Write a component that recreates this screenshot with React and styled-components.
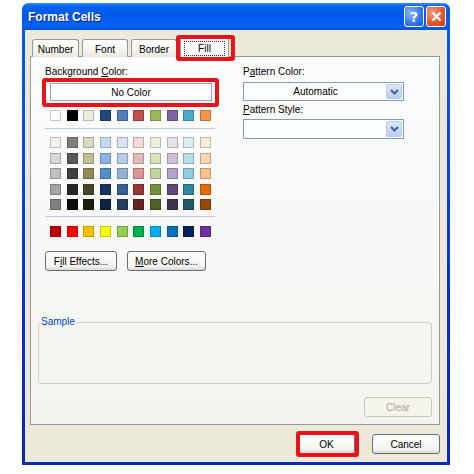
import React from "react";
import styled, { createGlobalStyle, css } from "styled-components";

const GlobalStyle = createGlobalStyle`
  html, body { margin: 0; padding: 0; background: #ffffff; }
  body { font-family: "Liberation Sans", Arial, sans-serif; font-size: 10px; color: #000; }
  * { box-sizing: border-box; }
`;

const Page = styled.div`
  padding: 3px 0 0 22px;
`;

const Window = styled.div`
  width: 428px;
  height: 462px;
  display: flex;
  flex-direction: column;
  background: linear-gradient(to bottom, #0a5fe8, #0831d9 60%, #0a2bb8);
  border-radius: 7px 7px 0 0;
  overflow: hidden;
`;

const TitleBar = styled.div`
  height: 27px;
  flex: none;
  display: flex;
  align-items: center;
  padding: 0 4px 0 6px;
  background: linear-gradient(
    to bottom,
    #3d95ff 0%,
    #0a66f0 10%,
    #0058e6 40%,
    #0062f4 85%,
    #0050dc 100%
  );
  color: #ffffff;
`;

const Title = styled.div`
  flex: 1;
  font-family: "Liberation Sans", Arial, sans-serif;
  font-weight: bold;
  font-size: 12px;
  text-shadow: 1px 1px 0 #0a1e8a;
  padding-top: 1px;
`;

const Caption = styled.div`
  width: 20px;
  height: 21px;
  margin-left: 2px;
  border: 1px solid #ffffff;
  border-radius: 3px;
  display: flex;
  align-items: center;
  justify-content: center;
  color: #ffffff;
  font-family: "DejaVu Sans", sans-serif;
  font-weight: bold;
  font-size: 14px;
  ${(p) =>
    p.$close
      ? css`
          background: radial-gradient(circle at 30% 30%, #f0a080, #e2582f 55%, #c43a14);
        `
      : css`
          background: radial-gradient(circle at 30% 30%, #8fb6ff, #3a78f2 55%, #1c55d6);
        `}
`;

const Body = styled.div`
  flex: 1;
  margin: 0 3px 3px;
  background: #ece9d8;
  display: flex;
  flex-direction: column;
  padding: 5px 7px 8px 5px;
`;

const TabRow = styled.div`
  height: 22px;
  display: flex;
  align-items: flex-end;
  padding-left: 2px;
  margin-bottom: -1px;
  position: relative;
  z-index: 2;
`;

const Tab = styled.div`
  position: relative;
  width: ${(p) => p.$w}px;
  margin-right: 3px;
  height: ${(p) => (p.$active ? 22 : 18)}px;
  display: flex;
  align-items: center;
  justify-content: center;
  border: 1px solid #919b9c;
  border-bottom: none;
  border-radius: 3px 3px 0 0;
  font-size: 10px;
  padding-top: ${(p) => (p.$active ? 2 : 1)}px;
  background: ${(p) =>
    p.$active ? "#fcfcfe" : "linear-gradient(to bottom, #ffffff, #f3f2ec 70%, #e8e6dc)"};
  ${(p) =>
    p.$active &&
    css`
      border-top: 2px solid #ffc83c;
      &::after {
        content: "";
        position: absolute;
        top: -2px;
        left: -5px;
        right: -7px;
        bottom: -4px;
        border: 4px solid #e8131b;
        border-radius: 3px;
        z-index: 5;
      }
    `}
`;

const Focus = styled.span`
  border: 1px dotted #333;
  padding: 1px 13px;
  line-height: 11px;
`;

const Panel = styled.div`
  flex: 1;
  border: 1px solid #919b9c;
  background: linear-gradient(to bottom, #fcfcfe, #f4f3ee);
  display: flex;
  flex-direction: column;
  padding: 9px 7px 7px 7px;
  position: relative;
  z-index: 1;
`;

const TopGrid = styled.div`
  display: grid;
  grid-template-columns: 170px 161px;
  column-gap: 28px;
  padding-left: 7px;
  align-items: start;
`;

const Column = styled.div`
  display: flex;
  flex-direction: column;
`;

const Label = styled.div`
  height: 12px;
  line-height: 12px;
  font-size: 10px;
  margin-top: ${(p) => p.$mt || 0}px;
  white-space: nowrap;
`;

const Highlight = styled.div`
  position: relative;
  &::after {
    content: "";
    position: absolute;
    top: ${(p) => p.$t}px;
    left: ${(p) => p.$l}px;
    right: ${(p) => p.$r}px;
    bottom: ${(p) => p.$b}px;
    border: 4px solid #e8131b;
    border-radius: 3px;
    pointer-events: none;
    z-index: 5;
  }
`;

const NoColorWrap = styled(Highlight)`
  width: 162px;
  margin: 5px 0 0 5px;
`;

const NoColorButton = styled.div`
  width: 162px;
  height: 18px;
  border: 1px solid #9aa3ad;
  background: #ffffff;
  display: flex;
  align-items: center;
  justify-content: center;
  font-size: 10px;
`;

const SwatchGrid = styled.div`
  display: grid;
  grid-template-columns: repeat(10, 11px);
  column-gap: 5.67px;
  row-gap: 4.5px;
  margin-left: 5px;
  margin-top: ${(p) => p.$mt}px;
`;

const Swatch = styled.div`
  width: 11px;
  height: 11px;
  border: 1px solid rgba(0, 0, 0, 0.22);
`;

const Separator = styled.div`
  width: 170px;
  height: 1px;
  background: #b7cbe3;
  margin-top: ${(p) => p.$mt}px;
`;

const ButtonRow = styled.div`
  display: flex;
  gap: 10px;
  margin-top: ${(p) => p.$mt || 0}px;
  justify-content: ${(p) => p.$justify || "flex-start"};
`;

const Button = styled.div`
  width: ${(p) => p.$w}px;
  height: 20px;
  border: 1px solid ${(p) => (p.$disabled ? "#c9c7ba" : "#5e6f86")};
  border-radius: 3px;
  display: flex;
  align-items: center;
  justify-content: center;
  font-size: 10px;
  color: ${(p) => (p.$disabled ? "#aca899" : "#000")};
  background: ${(p) =>
    p.$disabled
      ? "#f5f4ea"
      : "linear-gradient(to bottom, #ffffff, #f3f3ef 80%, #dcd8cc)"};
  white-space: nowrap;
`;

const Select = styled.div`
  width: 161px;
  height: ${(p) => p.$h}px;
  margin-top: ${(p) => p.$mt}px;
  border: 1px solid #7f9db9;
  background: #ffffff;
  display: flex;
  align-items: center;
  padding: 1px;
`;

const SelectText = styled.div`
  flex: 1;
  text-align: center;
  font-size: 10px;
`;

const Arrow = styled.div`
  width: 16px;
  height: 100%;
  border: 1px solid #b9c9ef;
  border-radius: 2px;
  background: linear-gradient(to bottom, #dbe5fd, #bccdf8);
  display: flex;
  align-items: center;
  justify-content: center;
`;

const SampleBox = styled.div`
  position: relative;
  margin-top: auto;
  height: 62px;
  border: 1px solid #d0d0bf;
  border-radius: 4px;
`;

const SampleLabel = styled.span`
  position: absolute;
  top: -7px;
  left: 1px;
  padding: 0 1px;
  background: #f6f5f0;
  color: #0046d5;
  font-size: 10px;
  line-height: 12px;
`;

const Footer = styled.div`
  display: flex;
  justify-content: flex-end;
  gap: 17px;
  margin-top: 9px;
`;

const U = styled.span`
  text-decoration: underline;
  text-underline-offset: 1px;
`;

const row1 = ["#ffffff", "#000000", "#eeece1", "#1f497d", "#4f81bd", "#c0504d", "#9bbb59", "#8064a2", "#4bacc6", "#f79646"];
const theme = [
  ["#f2f2f2", "#7f7f7f", "#ddd9c3", "#c6d9f0", "#dbe5f1", "#f2dcdb", "#ebf1dd", "#e5e0ec", "#dbeef3", "#fdeada"],
  ["#d8d8d8", "#595959", "#c4bd97", "#8db3e2", "#b8cce4", "#e5b9b7", "#d7e3bc", "#ccc1d9", "#b7dde8", "#fbd5b5"],
  ["#bfbfbf", "#3f3f3f", "#938953", "#548dd4", "#95b3d7", "#d99694", "#c3d69b", "#b2a2c7", "#92cddc", "#fac08f"],
  ["#a5a5a5", "#262626", "#494429", "#17365d", "#366092", "#953734", "#76923c", "#5f497a", "#31859b", "#e36c09"],
  ["#7f7f7f", "#0c0c0c", "#1d1b10", "#0f243e", "#244061", "#632423", "#4f6128", "#3f3151", "#205867", "#974806"],
];
const standard = ["#c00000", "#ff0000", "#ffc000", "#ffff00", "#92d050", "#00b050", "#00b0f0", "#0070c0", "#002060", "#7030a0"];

const Chevron = () => (
  <svg width="9" height="6" viewBox="0 0 9 6">
    <polyline points="1,1 4.5,4.5 8,1" fill="none" stroke="#4d6185" strokeWidth="2" />
  </svg>
);

export default function App() {
  return (
    <>
      <GlobalStyle />
      <Page>
        <Window>
          <TitleBar>
            <Title>Format Cells</Title>
            <Caption>?</Caption>
            <Caption $close>
              <svg width="11" height="11" viewBox="0 0 11 11">
                <path d="M1.5 1.5 L9.5 9.5 M9.5 1.5 L1.5 9.5" stroke="#fff" strokeWidth="2.2" />
              </svg>
            </Caption>
          </TitleBar>
          <Body>
            <TabRow>
              <Tab $w={47}>Number</Tab>
              <Tab $w={46}>Font</Tab>
              <Tab $w={46}>Border</Tab>
              <Tab $w={49} $active>
                <Focus>Fill</Focus>
              </Tab>
            </TabRow>
            <Panel>
              <TopGrid>
                <Column>
                  <Label>
                    Background <U>C</U>olor:
                  </Label>
                  <NoColorWrap $t={-5} $l={-8} $r={-7} $b={-6}>
                    <NoColorButton>No Color</NoColorButton>
                  </NoColorWrap>
                  <SwatchGrid $mt={9}>
                    {row1.map((c, i) => (
                      <Swatch key={i} style={{ background: c }} />
                    ))}
                  </SwatchGrid>
                  <Separator $mt={7} />
                  <SwatchGrid $mt={8}>
                    {theme.flat().map((c, i) => (
                      <Swatch key={i} style={{ background: c }} />
                    ))}
                  </SwatchGrid>
                  <Separator $mt={6} />
                  <SwatchGrid $mt={9}>
                    {standard.map((c, i) => (
                      <Swatch key={i} style={{ background: c }} />
                    ))}
                  </SwatchGrid>
                  <ButtonRow $mt={14}>
                    <Button $w={72}>
                      F<U>i</U>ll Effects...
                    </Button>
                    <Button $w={79}>
                      <U>M</U>ore Colors...
                    </Button>
                  </ButtonRow>
                </Column>
                <Column>
                  <Label>
                    P<U>a</U>ttern Color:
                  </Label>
                  <Select $h={19} $mt={4}>
                    <SelectText>Automatic</SelectText>
                    <Arrow>
                      <Chevron />
                    </Arrow>
                  </Select>
                  <Label $mt={3}>
                    <U>P</U>attern Style:
                  </Label>
                  <Select $h={20} $mt={3}>
                    <SelectText />
                    <Arrow>
                      <Chevron />
                    </Arrow>
                  </Select>
                </Column>
              </TopGrid>
              <SampleBox>
                <SampleLabel>Sample</SampleLabel>
              </SampleBox>
              <ButtonRow $mt={13} $justify="flex-end">
                <Button $w={68} $disabled>
                  Clear
                </Button>
              </ButtonRow>
            </Panel>
            <Footer>
              <Highlight $t={-3} $l={-2} $r={-4} $b={-3}>
                <Button $w={57}>OK</Button>
              </Highlight>
              <Button $w={68}>Cancel</Button>
            </Footer>
          </Body>
        </Window>
      </Page>
    </>
  );
}
